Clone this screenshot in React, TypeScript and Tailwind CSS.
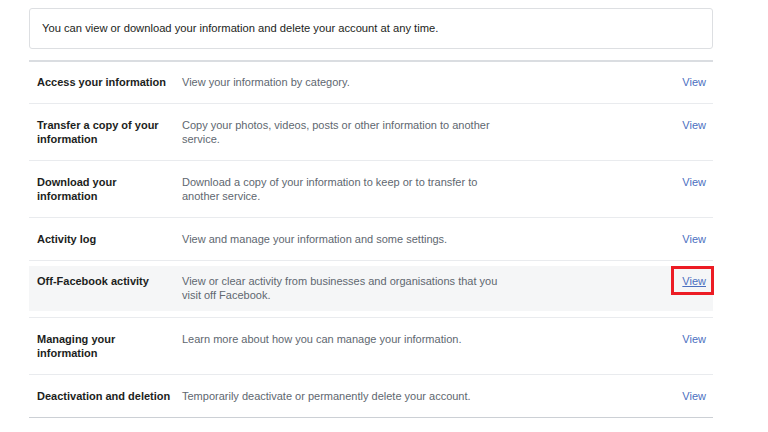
import React from 'react';

type Row = {
  title: string;
  description: string;
  highlighted?: boolean;
};

const rows: Row[] = [
  { title: 'Access your information', description: 'View your information by category.' },
  {
    title: 'Transfer a copy of your information',
    description: 'Copy your photos, videos, posts or other information to another service.',
  },
  {
    title: 'Download your information',
    description: 'Download a copy of your information to keep or to transfer to another service.',
  },
  { title: 'Activity log', description: 'View and manage your information and some settings.' },
  {
    title: 'Off-Facebook activity',
    description: 'View or clear activity from businesses and organisations that you visit off Facebook.',
    highlighted: true,
  },
  { title: 'Managing your information', description: 'Learn more about how you can manage your information.' },
  {
    title: 'Deactivation and deletion',
    description: 'Temporarily deactivate or permanently delete your account.',
  },
];

function SettingRow({ row, first, last }: { row: Row; first: boolean; last: boolean }) {
  const border = last ? 'border-b border-[#ccd0d5]' : 'border-b border-[#e9ebee]';

  if (row.highlighted) {
    return (
      <div className={border}>
        <div className="mt-[5px] mb-[6px] flex items-start bg-[#f5f6f7] pt-[8px] pb-[9px] pl-2 pr-[7px] leading-[14px]">
          <div className="w-[145px] shrink-0 pr-[5px] font-bold text-[#1c1e21]">{row.title}</div>
          <div className="w-[325px] text-[#606770]">{row.description}</div>
          <div className="ml-auto">
            <a href="#" className="relative text-[#4b6fbf] underline">
              View
              <span className="pointer-events-none absolute -top-[9px] -bottom-[8px] -left-[11px] -right-[8px] border-[3px] border-[#ec1c24]" />
            </a>
          </div>
        </div>
      </div>
    );
  }

  return (
    <div
      className={`flex items-start ${first ? 'pt-[13px]' : 'pt-[14px]'} pb-[14px] pl-2 pr-[7px] leading-[14px] ${border}`}
    >
      <div className="w-[145px] shrink-0 pr-[5px] font-bold text-[#1c1e21]">{row.title}</div>
      <div className="w-[325px] text-[#606770]">{row.description}</div>
      <a href="#" className="ml-auto text-[#4b6fbf]">
        View
      </a>
    </div>
  );
}

export default function App() {
  return (
    <div className="h-[432px] w-[768px] bg-white pt-2 font-['Liberation_Sans',Arial,sans-serif] text-[11px]">
      <div className="ml-[29px] w-[684px]">
        <div className="rounded-[3px] border border-[#dddfe2] px-3 py-[12px] text-[11.2px] leading-[15px] text-[#1c1e21]">
          You can view or download your information and delete your account at any time.
        </div>
        <div className="mt-[11px] border-t-2 border-[#dadde1]">
          {rows.map((row, i) => (
            <SettingRow key={row.title} row={row} first={i === 0} last={i === rows.length - 1} />
          ))}
        </div>
      </div>
    </div>
  );
}
